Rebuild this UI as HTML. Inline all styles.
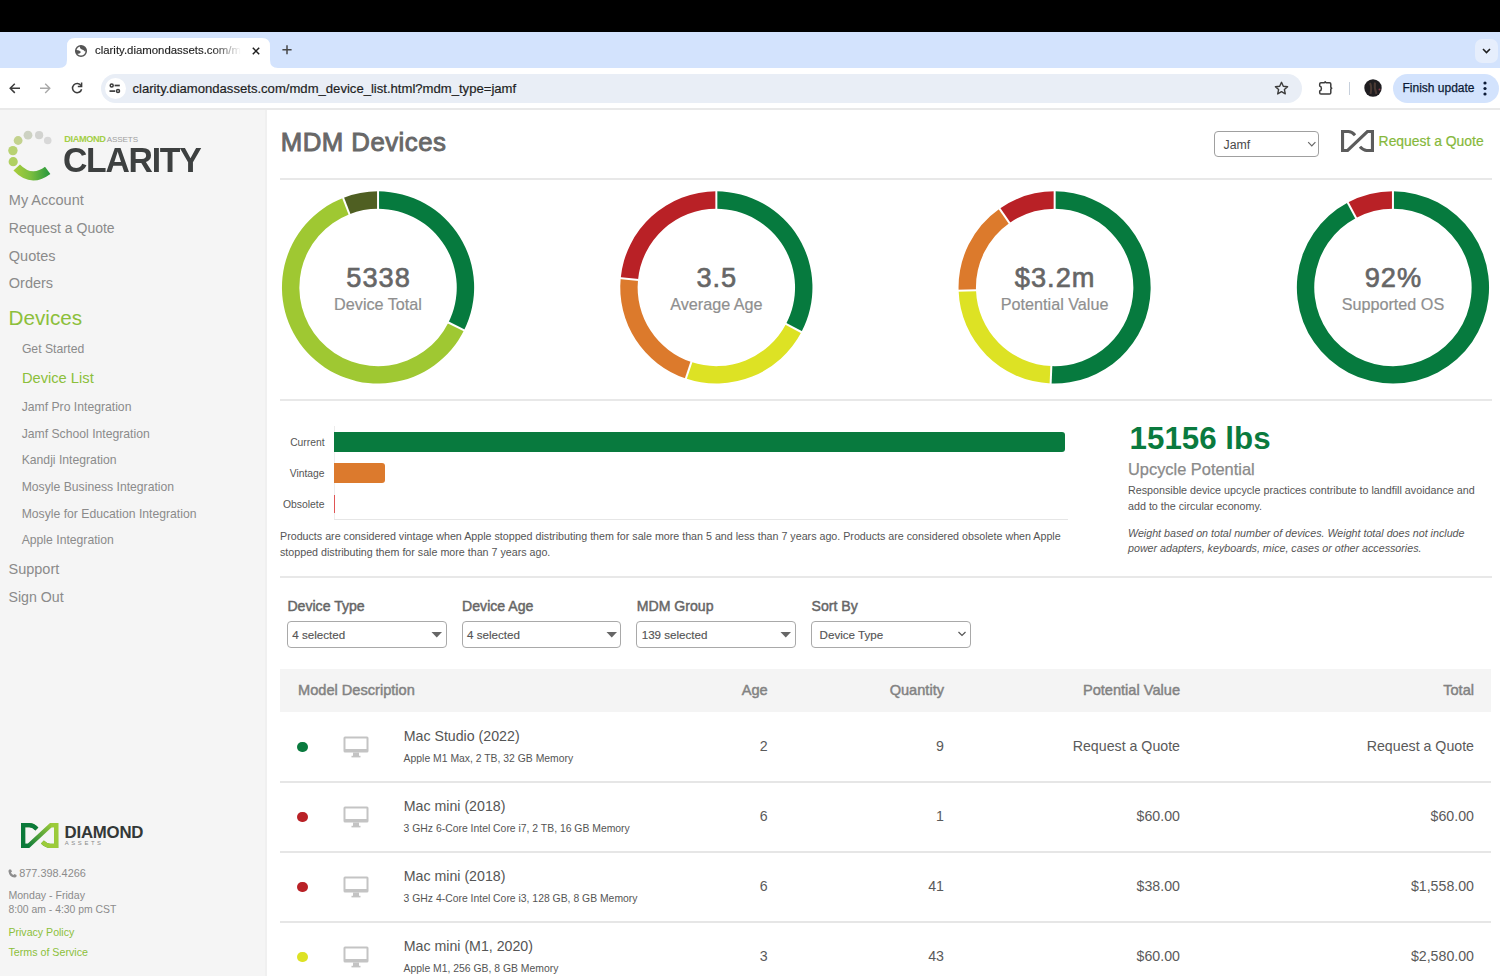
<!DOCTYPE html><html><head><meta charset="utf-8"><style>
html,body{margin:0;padding:0;}
body{width:1500px;height:976px;overflow:hidden;position:relative;background:#fff;font-family:"Liberation Sans",sans-serif;}
.t{position:absolute;white-space:nowrap;}
.r{position:absolute;}
svg{position:absolute;overflow:visible;}
</style></head><body>
<div class="r" style="left:0px;top:0px;width:1500px;height:32px;background:#000;"></div>
<div class="r" style="left:0px;top:32px;width:1500px;height:36px;background:#d3e3fd;"></div>
<div class="r" style="left:0px;top:68px;width:1500px;height:40px;background:#fff;"></div>
<div class="r" style="left:0px;top:108px;width:1500px;height:2px;background:#e9e9e9;"></div>
<svg style="left:0;top:0" width="1500" height="110">
<path d="M59,68 Q67,68 67,60 L67,46 Q67,38 75,38 L262,38 Q270,38 270,46 L270,60 Q270,68 278,68 Z" fill="#fff"/>
</svg>
<svg style="left:73.8px;top:43.6px" width="14" height="14" viewBox="0 0 14 14">
<circle cx="7" cy="7" r="5.3" stroke="#555" stroke-width="1.5" fill="#fff"/>
<path d="M5.8,1.7 Q5.6,4.8 8,5.4 Q9.8,5.8 11.2,7.8 L12.4,5.2 Q10.6,1.2 5.8,1.7 Z" fill="#555"/>
<path d="M1.7,6 Q5,5.6 7,8 Q6,10.2 2.2,10 Z" fill="#555"/>
</svg>
<div class="t" style="top:44.65px;font-size:11.4px;line-height:11.4px;color:#1f1f1f;-webkit-text-stroke:0.15px #1f1f1f;left:95.00px;"><span style="display:inline-block;width:146px;overflow:hidden;vertical-align:top;-webkit-mask-image:linear-gradient(90deg,#000 80%,transparent)">clarity.diamondassets.com/mdm_device_list</span></div>
<svg style="left:251.5px;top:46.5px" width="8" height="8" viewBox="0 0 8 8"><path d="M0.8,0.8 L7.2,7.2 M7.2,0.8 L0.8,7.2" stroke="#1f1f1f" stroke-width="1.5"/></svg>
<svg style="left:282px;top:45px" width="10" height="10" viewBox="0 0 10 10"><path d="M5,0.3 V9.3 M0.4,4.8 H9.6" stroke="#474747" stroke-width="1.5"/></svg>
<div class="r" style="left:1475px;top:39px;width:23px;height:23.5px;background:#e6eefc;border-radius:7px;"></div>
<svg style="left:1480px;top:44px" width="13" height="13" viewBox="0 0 13 13"><path d="M3,5 L6.5,8.5 L10,5" stroke="#1f1f1f" stroke-width="1.6" fill="none"/></svg>
<svg style="left:9px;top:83px" width="12" height="11" viewBox="0 0 12 11"><path d="M11,5.3 H1.2 M5.8,0.7 L1.2,5.3 L5.8,9.9" stroke="#3c3c3c" stroke-width="1.5" fill="none"/></svg>
<svg style="left:40px;top:83px" width="12" height="11" viewBox="0 0 12 11"><path d="M0,5.3 H9.8 M5.2,0.7 L9.8,5.3 L5.2,9.9" stroke="#a9a9a9" stroke-width="1.4" fill="none"/></svg>
<svg style="left:70.7px;top:81.9px" width="12" height="12" viewBox="0 0 12 12"><path d="M10,3.6 A4.6,4.6 0 1 0 10.6,7.2" stroke="#3c3c3c" stroke-width="1.5" fill="none"/><path d="M10.6,0.6 V4.4 H6.8" stroke="#3c3c3c" stroke-width="1.5" fill="none"/></svg>
<div class="r" style="left:101px;top:74px;width:1201px;height:28.5px;background:#e9eef6;border-radius:14.5px;"></div>
<div class="r" style="left:105px;top:78px;width:21px;height:21px;border-radius:50%;background:#fff;"></div>
<svg style="left:108px;top:81px" width="15" height="15" viewBox="0 0 15 15">
<circle cx="3.7" cy="4.5" r="1.5" stroke="#3c3c3c" stroke-width="1.5" fill="none"/><path d="M6.6,4.5 H11.8" stroke="#3c3c3c" stroke-width="1.7"/>
<circle cx="10" cy="10.1" r="1.5" stroke="#3c3c3c" stroke-width="1.5" fill="none"/><path d="M1.5,10.1 H7.2" stroke="#3c3c3c" stroke-width="1.7"/>
</svg>
<div class="t" style="top:82.21px;font-size:13.1px;line-height:13.1px;color:#1f1f1f;-webkit-text-stroke:0.2px #1f1f1f;left:132.50px;">clarity.diamondassets.com/mdm_device_list.html?mdm_type=jamf</div>
<svg style="left:1274px;top:81px" width="15" height="15" viewBox="0 0 15 15"><path d="M7.5,1.3 L9.3,5.3 L13.6,5.7 L10.4,8.6 L11.3,12.9 L7.5,10.7 L3.7,12.9 L4.6,8.6 L1.4,5.7 L5.7,5.3 Z" stroke="#3c3c3c" stroke-width="1.4" fill="none" stroke-linejoin="round"/></svg>
<svg style="left:1318px;top:80px" width="17" height="16" viewBox="0 0 17 16"><path d="M3,2.8 H6.3 L7.2,1.9 L8.1,2.8 H11.5 Q12.8,2.8 12.8,4.1 V7.3 L13.7,8.2 L12.8,9.1 V12.7 Q12.8,14 11.5,14 H3 Q1.7,14 1.7,12.7 V11 Q3.4,10.6 3.4,8.5 Q3.4,6.4 1.7,6 V4.1 Q1.7,2.8 3,2.8 Z" stroke="#3c3c3c" stroke-width="1.5" fill="none" stroke-linejoin="round"/></svg>
<div class="r" style="left:1349px;top:82px;width:1px;height:13px;background:#c7d0dc;"></div>
<svg style="left:1363.5px;top:79px" width="18" height="18" viewBox="0 0 18 18"><circle cx="9" cy="9" r="8.7" fill="#1f1d20"/><path d="M6,4 Q8,8 6.5,15 M11,3.5 Q10,9 12.5,15" stroke="#4a3a34" stroke-width="2" fill="none"/><circle cx="15.5" cy="10.5" r="1" fill="#8a3a4a"/></svg>
<div class="r" style="left:1392.5px;top:73.5px;width:106px;height:29px;background:#d3e3fd;border-radius:14.5px;"></div>
<div class="t" style="top:82.34px;font-size:12px;line-height:12px;color:#0b1a36;-webkit-text-stroke:0.25px #0b1a36;left:1402.50px;">Finish update</div>
<svg style="left:1482px;top:80px" width="6" height="17" viewBox="0 0 6 17"><circle cx="3" cy="3" r="1.6" fill="#0b1a36"/><circle cx="3" cy="8.5" r="1.6" fill="#0b1a36"/><circle cx="3" cy="14" r="1.6" fill="#0b1a36"/></svg>
<div class="r" style="left:0px;top:110px;width:267px;height:866px;background:#f5f5f5;"></div>
<div class="r" style="left:265px;top:110px;width:2px;height:866px;background:#f0f0f0;"></div>
<svg style="left:0;top:120px" width="60" height="70" viewBox="0 0 60 70">
<defs><linearGradient id="lg1" gradientUnits="userSpaceOnUse" x1="14" y1="0" x2="50" y2="0"><stop offset="0" stop-color="#a9cd3c"/><stop offset="0.45" stop-color="#7dbf3f"/><stop offset="1" stop-color="#26983e"/></linearGradient></defs>
<circle cx="47.7" cy="20.5" r="3.8" fill="#d8d8d8"/>
<circle cx="39.1" cy="15.2" r="4.1" fill="#d2d3d0"/>
<circle cx="28" cy="15.2" r="4.4" fill="#cdd2c2"/>
<circle cx="18.1" cy="20.5" r="4.4" fill="#c3d28e"/>
<circle cx="12.9" cy="30.6" r="4.7" fill="#b8d272"/>
<circle cx="13.2" cy="41.7" r="4.6" fill="#b0d062"/>
<path d="M16.7,47.5 Q31.2,62.65 47.7,50.4" stroke="url(#lg1)" stroke-width="9" fill="none"/>
</svg>
<div class="t" style="top:134.91px;font-size:9.2px;line-height:9.2px;color:#555;left:64.20px;"><span style="color:#a3cf45;font-weight:bold;letter-spacing:-0.35px">DIAMOND</span><span style="color:#a0a0a0;margin-left:1px;letter-spacing:-0.1px;font-size:8.1px">ASSETS</span></div>
<div class="t" style="top:142.85px;font-size:35.5px;line-height:35.5px;color:#3d4040;font-weight:bold;letter-spacing:-1.3px;left:62.50px;transform:scaleX(0.95);transform-origin:left;">CLARITY</div>
<div class="t" style="top:193.03px;font-size:14.5px;line-height:14.5px;color:#8b8b8b;left:8.80px;">My Account</div>
<div class="t" style="top:221.45px;font-size:14px;line-height:14px;color:#8b8b8b;left:8.80px;">Request a Quote</div>
<div class="t" style="top:249.03px;font-size:14.5px;line-height:14.5px;color:#8b8b8b;left:8.80px;">Quotes</div>
<div class="t" style="top:276.43px;font-size:14.5px;line-height:14.5px;color:#8b8b8b;left:8.80px;">Orders</div>
<div class="t" style="top:307.68px;font-size:20.7px;line-height:20.7px;color:#8cbf3b;left:8.50px;">Devices</div>
<div class="t" style="top:342.57px;font-size:12.2px;line-height:12.2px;color:#8b8b8b;left:21.90px;">Get Started</div>
<div class="t" style="top:370.56px;font-size:14.7px;line-height:14.7px;color:#8cbf3b;left:21.90px;">Device List</div>
<div class="t" style="top:400.87px;font-size:12.2px;line-height:12.2px;color:#8b8b8b;left:21.70px;">Jamf Pro Integration</div>
<div class="t" style="top:427.57px;font-size:12.2px;line-height:12.2px;color:#8b8b8b;left:21.70px;">Jamf School Integration</div>
<div class="t" style="top:454.27px;font-size:12.2px;line-height:12.2px;color:#8b8b8b;left:21.70px;">Kandji Integration</div>
<div class="t" style="top:480.97px;font-size:12.2px;line-height:12.2px;color:#8b8b8b;left:21.70px;">Mosyle Business Integration</div>
<div class="t" style="top:507.67px;font-size:12.2px;line-height:12.2px;color:#8b8b8b;left:21.70px;">Mosyle for Education Integration</div>
<div class="t" style="top:534.37px;font-size:12.2px;line-height:12.2px;color:#8b8b8b;left:21.70px;">Apple Integration</div>
<div class="t" style="top:562.03px;font-size:14.5px;line-height:14.5px;color:#8b8b8b;left:8.50px;">Support</div>
<div class="t" style="top:590.08px;font-size:14.2px;line-height:14.2px;color:#8b8b8b;left:8.50px;">Sign Out</div>
<svg style="left:20.6px;top:823px" width="37.3" height="25" viewBox="0 0 37.3 25"><defs><linearGradient id="g2" gradientUnits="userSpaceOnUse" x1="7.46" y1="25" x2="29.84" y2="0"><stop offset="0" stop-color="#0b7a3a"/><stop offset="1" stop-color="#9ccb3a"/></linearGradient></defs><path d="M15.89,5.90 Q12.09,2.10 8.21,2.10 L2.10,2.10 L2.10,22.90 L7.46,22.90 L29.84,2.10 L35.20,2.10 L35.20,22.90 L29.09,22.90 Q25.21,22.90 21.41,19.10" stroke="url(#g2)" stroke-width="4.2" fill="none"/><path d="M15.89,5.90 Q12.09,2.10 8.21,2.10 L2.10,2.10 L2.10,22.90 L7.46,22.90" stroke="#0b7a3a" stroke-width="4.2" fill="none"/><path d="M29.84,2.10 L35.20,2.10 L35.20,22.90 L29.09,22.90 Q25.21,22.90 21.41,19.10" stroke="#9ccb3a" stroke-width="4.2" fill="none"/></svg>
<div class="t" style="top:825.18px;font-size:16.8px;line-height:16.8px;color:#333837;font-weight:bold;letter-spacing:-0.2px;left:64.50px;">DIAMOND</div>
<div class="t" style="top:841.01px;font-size:5.9px;line-height:5.9px;color:#8a8a8a;letter-spacing:2.6px;left:64.80px;">ASSETS</div>
<svg style="left:8px;top:869px" width="9" height="9" viewBox="0 0 9 9"><path d="M1.2,0.6 L3,0.4 L4,2.6 L2.9,3.5 Q3.8,5.3 5.5,6.1 L6.4,5 L8.6,6 L8.4,7.8 Q7.8,8.6 6.6,8.5 Q1.2,7.6 0.5,2.4 Q0.4,1.2 1.2,0.6Z" fill="#8e8e8e"/></svg>
<div class="t" style="top:868.27px;font-size:10.9px;line-height:10.9px;color:#8b8b8b;left:19.20px;">877.398.4266</div>
<div class="t" style="top:889.93px;font-size:10.6px;line-height:10.6px;color:#8b8b8b;left:8.40px;">Monday - Friday</div>
<div class="t" style="top:905.40px;font-size:10.4px;line-height:10.4px;color:#8b8b8b;left:8.40px;">8:00 am - 4:30 pm CST</div>
<div class="t" style="top:926.83px;font-size:10.6px;line-height:10.6px;color:#8cbf3b;left:8.40px;">Privacy Policy</div>
<div class="t" style="top:947.34px;font-size:10.7px;line-height:10.7px;color:#8cbf3b;left:8.40px;">Terms of Service</div>
<div class="t" style="top:130.06px;font-size:25.8px;line-height:25.8px;color:#686868;letter-spacing:0.45px;-webkit-text-stroke:0.9px #686868;left:280.80px;">MDM Devices</div>
<div class="r" style="left:1214.4px;top:131px;width:102.6px;height:24.4px;border:1px solid #a0a0a0;border-radius:4px;background:#fff;"></div>
<div class="t" style="top:139.09px;font-size:12.3px;line-height:12.3px;color:#4a4a4a;left:1223.60px;">Jamf</div>
<svg style="left:1307px;top:141px" width="10" height="7" viewBox="0 0 10 7"><path d="M1.2,1.2 L4.8,4.8 L8.4,1.2" stroke="#666" stroke-width="1.2" fill="none"/></svg>
<svg style="left:1341px;top:130px" width="33" height="22" viewBox="0 0 33 22"><path d="M14.06,5.19 Q10.69,1.55 7.26,1.55 L1.55,1.55 L1.55,20.45 L6.60,20.45 L26.40,1.55 L31.45,1.55 L31.45,20.45 L25.74,20.45 Q22.31,20.45 18.94,16.81" stroke="#5c5c5c" stroke-width="3.1" fill="none" stroke-linejoin="miter"/></svg>
<div class="t" style="top:135.23px;font-size:13.9px;line-height:13.9px;color:#86b83a;-webkit-text-stroke:0.2px #86b83a;left:1378.60px;">Request a Quote</div>
<div class="r" style="left:280px;top:178px;width:1212px;height:1.5px;background:#e8e8e8;"></div>
<svg style="left:0;top:0" width="1500" height="976"><path d="M378.05,191.35 A96.1,96.1 0 0 1 464.05,330.33 L448.48,322.57 A78.7,78.7 0 0 0 378.05,208.75 Z" fill="#067a3e"/><path d="M464.05,330.33 A96.1,96.1 0 1 1 343.14,197.91 L349.46,214.13 A78.7,78.7 0 1 0 448.48,322.57 Z" fill="#9fc832"/><path d="M343.14,197.91 A96.1,96.1 0 0 1 378.05,191.35 L378.05,208.75 A78.7,78.7 0 0 0 349.46,214.13 Z" fill="#4f5f22"/><line x1="378.05" y1="209.45" x2="378.05" y2="189.45" stroke="#fff" stroke-width="2"/><line x1="447.85" y1="322.25" x2="465.75" y2="331.18" stroke="#fff" stroke-width="2"/><line x1="349.72" y1="214.78" x2="342.45" y2="196.14" stroke="#fff" stroke-width="2"/></svg>
<svg style="left:0;top:0" width="1500" height="976"><path d="M716.35,191.35 A96.1,96.1 0 0 1 801.44,332.12 L786.03,324.03 A78.7,78.7 0 0 0 716.35,208.75 Z" fill="#067a3e"/><path d="M801.44,332.12 A96.1,96.1 0 0 1 685.86,378.58 L691.38,362.08 A78.7,78.7 0 0 0 786.03,324.03 Z" fill="#dde224"/><path d="M685.86,378.58 A96.1,96.1 0 0 1 620.69,278.24 L638.01,279.91 A78.7,78.7 0 0 0 691.38,362.08 Z" fill="#dc7a2c"/><path d="M620.69,278.24 A96.1,96.1 0 0 1 716.35,191.35 L716.35,208.75 A78.7,78.7 0 0 0 638.01,279.91 Z" fill="#b92126"/><line x1="716.35" y1="209.45" x2="716.35" y2="189.45" stroke="#fff" stroke-width="2"/><line x1="785.41" y1="323.71" x2="803.12" y2="333.00" stroke="#fff" stroke-width="2"/><line x1="691.60" y1="361.42" x2="685.25" y2="380.39" stroke="#fff" stroke-width="2"/><line x1="638.71" y1="279.97" x2="618.80" y2="278.06" stroke="#fff" stroke-width="2"/></svg>
<svg style="left:0;top:0" width="1500" height="976"><path d="M1054.65,191.35 A96.1,96.1 0 1 1 1050.63,383.47 L1051.35,366.08 A78.7,78.7 0 1 0 1054.65,208.75 Z" fill="#067a3e"/><path d="M1050.63,383.47 A96.1,96.1 0 0 1 958.61,290.80 L976.00,290.20 A78.7,78.7 0 0 0 1051.35,366.08 Z" fill="#dde224"/><path d="M958.61,290.80 A96.1,96.1 0 0 1 999.53,208.73 L1009.51,222.98 A78.7,78.7 0 0 0 976.00,290.20 Z" fill="#dc7a2c"/><path d="M999.53,208.73 A96.1,96.1 0 0 1 1054.65,191.35 L1054.65,208.75 A78.7,78.7 0 0 0 1009.51,222.98 Z" fill="#b92126"/><line x1="1054.65" y1="209.45" x2="1054.65" y2="189.45" stroke="#fff" stroke-width="2"/><line x1="1051.38" y1="365.38" x2="1050.55" y2="385.36" stroke="#fff" stroke-width="2"/><line x1="976.70" y1="290.17" x2="956.71" y2="290.87" stroke="#fff" stroke-width="2"/><line x1="1009.91" y1="223.56" x2="998.44" y2="207.17" stroke="#fff" stroke-width="2"/></svg>
<svg style="left:0;top:0" width="1500" height="976"><path d="M1392.95,191.35 A96.1,96.1 0 1 1 1347.83,202.60 L1356.00,217.96 A78.7,78.7 0 1 0 1392.95,208.75 Z" fill="#067a3e"/><path d="M1347.83,202.60 A96.1,96.1 0 0 1 1392.95,191.35 L1392.95,208.75 A78.7,78.7 0 0 0 1356.00,217.96 Z" fill="#b92126"/><line x1="1392.95" y1="209.45" x2="1392.95" y2="189.45" stroke="#fff" stroke-width="2"/><line x1="1356.33" y1="218.58" x2="1346.94" y2="200.92" stroke="#fff" stroke-width="2"/></svg>
<div class="t" style="top:264.38px;font-size:27.2px;line-height:27.2px;color:#666;letter-spacing:1.0px;-webkit-text-stroke:0.65px #666;left:78.05px;width:600px;text-align:center;text-indent:1px;">5338</div>
<div class="t" style="top:295.89px;font-size:16.2px;line-height:16.2px;color:#8f8f8f;-webkit-text-stroke:0.2px #8f8f8f;left:78.05px;width:600px;text-align:center;">Device Total</div>
<div class="t" style="top:264.38px;font-size:27.2px;line-height:27.2px;color:#666;letter-spacing:1.0px;-webkit-text-stroke:0.65px #666;left:416.35px;width:600px;text-align:center;text-indent:1px;">3.5</div>
<div class="t" style="top:295.89px;font-size:16.2px;line-height:16.2px;color:#8f8f8f;-webkit-text-stroke:0.2px #8f8f8f;left:416.35px;width:600px;text-align:center;">Average Age</div>
<div class="t" style="top:264.38px;font-size:27.2px;line-height:27.2px;color:#666;letter-spacing:1.0px;-webkit-text-stroke:0.65px #666;left:754.65px;width:600px;text-align:center;text-indent:1px;">$3.2m</div>
<div class="t" style="top:295.89px;font-size:16.2px;line-height:16.2px;color:#8f8f8f;-webkit-text-stroke:0.2px #8f8f8f;left:754.65px;width:600px;text-align:center;">Potential Value</div>
<div class="t" style="top:264.38px;font-size:27.2px;line-height:27.2px;color:#666;letter-spacing:1.0px;-webkit-text-stroke:0.65px #666;left:1092.95px;width:600px;text-align:center;text-indent:1px;">92%</div>
<div class="t" style="top:295.89px;font-size:16.2px;line-height:16.2px;color:#8f8f8f;-webkit-text-stroke:0.2px #8f8f8f;left:1092.95px;width:600px;text-align:center;">Supported OS</div>
<div class="r" style="left:280px;top:399px;width:1212px;height:1.5px;background:#e8e8e8;"></div>
<div class="r" style="left:334px;top:426px;width:1px;height:94px;background:#ececec;"></div>
<div class="r" style="left:334px;top:519px;width:734px;height:1px;background:#e6e6e6;"></div>
<div class="r" style="left:334px;top:432px;width:730.5px;height:20px;background:#087a3e;border-radius:0 3px 3px 0;"></div>
<div class="r" style="left:334px;top:463.4px;width:51.2px;height:19.6px;background:#dc7a2d;border-radius:0 3px 3px 0;"></div>
<div class="r" style="left:334px;top:495px;width:1.3px;height:18px;background:#e05555;"></div>
<div class="t" style="top:437.58px;font-size:10.3px;line-height:10.3px;color:#555;right:1175.50px;text-align:right;">Current</div>
<div class="t" style="top:468.58px;font-size:10.3px;line-height:10.3px;color:#555;right:1175.50px;text-align:right;">Vintage</div>
<div class="t" style="top:499.50px;font-size:10.4px;line-height:10.4px;color:#555;right:1175.50px;text-align:right;">Obsolete</div>
<div class="t" style="top:531.24px;font-size:10.7px;line-height:10.7px;color:#555;left:280.00px;">Products are considered vintage when Apple stopped distributing them for sale more than 5 and less than 7 years ago. Products are considered obsolete when Apple</div>
<div class="t" style="top:546.94px;font-size:10.7px;line-height:10.7px;color:#555;left:280.00px;">stopped distributing them for sale more than 7 years ago.</div>
<div class="r" style="left:280px;top:576px;width:1212px;height:1.5px;background:#e8e8e8;"></div>
<div class="t" style="top:422.70px;font-size:31.3px;line-height:31.3px;color:#0a7a3e;font-weight:bold;left:1129.60px;">15156 lbs</div>
<div class="t" style="top:460.72px;font-size:16.4px;line-height:16.4px;color:#8a8a8a;-webkit-text-stroke:0.25px #8a8a8a;left:1128.00px;">Upcycle Potential</div>
<div class="t" style="top:485.21px;font-size:10.74px;line-height:10.74px;color:#555;left:1128.00px;">Responsible device upcycle practices contribute to landfill avoidance and</div>
<div class="t" style="top:500.81px;font-size:10.74px;line-height:10.74px;color:#555;left:1128.00px;">add to the circular economy.</div>
<div class="t" style="top:527.54px;font-size:10.7px;line-height:10.7px;color:#555;font-style:italic;left:1128.00px;">Weight based on total number of devices. Weight total does not include</div>
<div class="t" style="top:543.14px;font-size:10.7px;line-height:10.7px;color:#555;font-style:italic;left:1128.00px;">power adapters, keyboards, mice, cases or other accessories.</div>
<div class="t" style="top:598.66px;font-size:14.1px;line-height:14.1px;color:#666;-webkit-text-stroke:0.45px #666;left:287.40px;">Device Type</div>
<div class="r" style="left:287.0px;top:621px;width:157.8px;height:25px;border:1px solid #a9a9a9;border-radius:4px;background:#fff;"></div>
<div class="t" style="top:629.18px;font-size:11.6px;line-height:11.6px;color:#555;-webkit-text-stroke:0.15px #555;left:292.30px;">4 selected</div>
<svg style="left:431.0px;top:631px" width="12" height="8" viewBox="0 0 12 8"><path d="M0.5,1 H11 L5.75,6.5 Z" fill="#666"/></svg>
<div class="t" style="top:598.66px;font-size:14.1px;line-height:14.1px;color:#666;-webkit-text-stroke:0.45px #666;left:462.10px;">Device Age</div>
<div class="r" style="left:461.7px;top:621px;width:157.8px;height:25px;border:1px solid #a9a9a9;border-radius:4px;background:#fff;"></div>
<div class="t" style="top:629.18px;font-size:11.6px;line-height:11.6px;color:#555;-webkit-text-stroke:0.15px #555;left:467.00px;">4 selected</div>
<svg style="left:605.7px;top:631px" width="12" height="8" viewBox="0 0 12 8"><path d="M0.5,1 H11 L5.75,6.5 Z" fill="#666"/></svg>
<div class="t" style="top:598.66px;font-size:14.1px;line-height:14.1px;color:#666;-webkit-text-stroke:0.45px #666;left:636.80px;">MDM Group</div>
<div class="r" style="left:636.4px;top:621px;width:157.8px;height:25px;border:1px solid #a9a9a9;border-radius:4px;background:#fff;"></div>
<div class="t" style="top:629.18px;font-size:11.6px;line-height:11.6px;color:#555;-webkit-text-stroke:0.15px #555;left:641.70px;">139 selected</div>
<svg style="left:780.4px;top:631px" width="12" height="8" viewBox="0 0 12 8"><path d="M0.5,1 H11 L5.75,6.5 Z" fill="#666"/></svg>
<div class="t" style="top:598.66px;font-size:14.1px;line-height:14.1px;color:#666;-webkit-text-stroke:0.45px #666;left:811.50px;">Sort By</div>
<div class="r" style="left:811.1px;top:621px;width:157.8px;height:25px;border:1px solid #a9a9a9;border-radius:4px;background:#fff;"></div>
<div class="t" style="top:629.18px;font-size:11.6px;line-height:11.6px;color:#555;-webkit-text-stroke:0.15px #555;left:819.60px;">Device Type</div>
<svg style="left:957.1px;top:630px" width="10" height="8" viewBox="0 0 10 8"><path d="M1.5,2 L5,5.5 L8.5,2" stroke="#555" stroke-width="1.2" fill="none"/></svg>
<div class="r" style="left:280px;top:669px;width:1211px;height:43px;background:#f4f4f4;"></div>
<div class="t" style="top:682.94px;font-size:14.6px;line-height:14.6px;color:#828282;-webkit-text-stroke:0.45px #828282;left:298.00px;">Model Description</div>
<div class="t" style="top:682.94px;font-size:14.6px;line-height:14.6px;color:#828282;-webkit-text-stroke:0.45px #828282;right:732.30px;text-align:right;">Age</div>
<div class="t" style="top:682.94px;font-size:14.6px;line-height:14.6px;color:#828282;-webkit-text-stroke:0.45px #828282;right:556.00px;text-align:right;">Quantity</div>
<div class="t" style="top:682.94px;font-size:14.6px;line-height:14.6px;color:#828282;-webkit-text-stroke:0.45px #828282;right:320.00px;text-align:right;">Potential Value</div>
<div class="t" style="top:682.94px;font-size:14.6px;line-height:14.6px;color:#828282;-webkit-text-stroke:0.45px #828282;right:26.00px;text-align:right;">Total</div>
<div class="r" style="left:297.20000000000005px;top:741.5px;width:10.8px;height:10.8px;border-radius:50%;background:#0a7a3e;"></div>
<svg style="left:342.5px;top:736px" width="26" height="22" viewBox="0 0 26 22">
<rect x="0.5" y="0.5" width="25" height="16" rx="1.5" fill="#c4c4c4"/>
<rect x="2.5" y="2.5" width="21" height="10.5" fill="#fff"/>
<rect x="10" y="16.5" width="6" height="3.5" fill="#c4c4c4"/>
<rect x="8.5" y="19.8" width="9" height="1.6" fill="#c4c4c4"/>
</svg>
<div class="t" style="top:729.48px;font-size:14.2px;line-height:14.2px;color:#555;left:403.70px;">Mac Studio (2022)</div>
<div class="t" style="top:753.50px;font-size:10.4px;line-height:10.4px;color:#555;left:403.60px;">Apple M1 Max, 2 TB, 32 GB Memory</div>
<div class="t" style="top:738.78px;font-size:14.2px;line-height:14.2px;color:#5a5a5a;right:732.30px;text-align:right;">2</div>
<div class="t" style="top:738.78px;font-size:14.2px;line-height:14.2px;color:#5a5a5a;right:556.00px;text-align:right;">9</div>
<div class="t" style="top:738.78px;font-size:14.2px;line-height:14.2px;color:#5a5a5a;right:320.00px;text-align:right;">Request a Quote</div>
<div class="t" style="top:738.78px;font-size:14.2px;line-height:14.2px;color:#5a5a5a;right:26.00px;text-align:right;">Request a Quote</div>
<div class="r" style="left:280px;top:781px;width:1211px;height:1.5px;background:#e6e6e6;"></div>
<div class="r" style="left:297.20000000000005px;top:811.5px;width:10.8px;height:10.8px;border-radius:50%;background:#b92126;"></div>
<svg style="left:342.5px;top:806px" width="26" height="22" viewBox="0 0 26 22">
<rect x="0.5" y="0.5" width="25" height="16" rx="1.5" fill="#c4c4c4"/>
<rect x="2.5" y="2.5" width="21" height="10.5" fill="#fff"/>
<rect x="10" y="16.5" width="6" height="3.5" fill="#c4c4c4"/>
<rect x="8.5" y="19.8" width="9" height="1.6" fill="#c4c4c4"/>
</svg>
<div class="t" style="top:799.48px;font-size:14.2px;line-height:14.2px;color:#555;left:403.70px;">Mac mini (2018)</div>
<div class="t" style="top:823.50px;font-size:10.4px;line-height:10.4px;color:#555;left:403.60px;">3 GHz 6-Core Intel Core i7, 2 TB, 16 GB Memory</div>
<div class="t" style="top:808.78px;font-size:14.2px;line-height:14.2px;color:#5a5a5a;right:732.30px;text-align:right;">6</div>
<div class="t" style="top:808.78px;font-size:14.2px;line-height:14.2px;color:#5a5a5a;right:556.00px;text-align:right;">1</div>
<div class="t" style="top:808.78px;font-size:14.2px;line-height:14.2px;color:#5a5a5a;right:320.00px;text-align:right;">$60.00</div>
<div class="t" style="top:808.78px;font-size:14.2px;line-height:14.2px;color:#5a5a5a;right:26.00px;text-align:right;">$60.00</div>
<div class="r" style="left:280px;top:851px;width:1211px;height:1.5px;background:#e6e6e6;"></div>
<div class="r" style="left:297.20000000000005px;top:881.5px;width:10.8px;height:10.8px;border-radius:50%;background:#b92126;"></div>
<svg style="left:342.5px;top:876px" width="26" height="22" viewBox="0 0 26 22">
<rect x="0.5" y="0.5" width="25" height="16" rx="1.5" fill="#c4c4c4"/>
<rect x="2.5" y="2.5" width="21" height="10.5" fill="#fff"/>
<rect x="10" y="16.5" width="6" height="3.5" fill="#c4c4c4"/>
<rect x="8.5" y="19.8" width="9" height="1.6" fill="#c4c4c4"/>
</svg>
<div class="t" style="top:869.48px;font-size:14.2px;line-height:14.2px;color:#555;left:403.70px;">Mac mini (2018)</div>
<div class="t" style="top:893.50px;font-size:10.4px;line-height:10.4px;color:#555;left:403.60px;">3 GHz 4-Core Intel Core i3, 128 GB, 8 GB Memory</div>
<div class="t" style="top:878.78px;font-size:14.2px;line-height:14.2px;color:#5a5a5a;right:732.30px;text-align:right;">6</div>
<div class="t" style="top:878.78px;font-size:14.2px;line-height:14.2px;color:#5a5a5a;right:556.00px;text-align:right;">41</div>
<div class="t" style="top:878.78px;font-size:14.2px;line-height:14.2px;color:#5a5a5a;right:320.00px;text-align:right;">$38.00</div>
<div class="t" style="top:878.78px;font-size:14.2px;line-height:14.2px;color:#5a5a5a;right:26.00px;text-align:right;">$1,558.00</div>
<div class="r" style="left:280px;top:921px;width:1211px;height:1.5px;background:#e6e6e6;"></div>
<div class="r" style="left:297.20000000000005px;top:951.5px;width:10.8px;height:10.8px;border-radius:50%;background:#dde224;"></div>
<svg style="left:342.5px;top:946px" width="26" height="22" viewBox="0 0 26 22">
<rect x="0.5" y="0.5" width="25" height="16" rx="1.5" fill="#c4c4c4"/>
<rect x="2.5" y="2.5" width="21" height="10.5" fill="#fff"/>
<rect x="10" y="16.5" width="6" height="3.5" fill="#c4c4c4"/>
<rect x="8.5" y="19.8" width="9" height="1.6" fill="#c4c4c4"/>
</svg>
<div class="t" style="top:939.48px;font-size:14.2px;line-height:14.2px;color:#555;left:403.70px;">Mac mini (M1, 2020)</div>
<div class="t" style="top:963.50px;font-size:10.4px;line-height:10.4px;color:#555;left:403.60px;">Apple M1, 256 GB, 8 GB Memory</div>
<div class="t" style="top:948.78px;font-size:14.2px;line-height:14.2px;color:#5a5a5a;right:732.30px;text-align:right;">3</div>
<div class="t" style="top:948.78px;font-size:14.2px;line-height:14.2px;color:#5a5a5a;right:556.00px;text-align:right;">43</div>
<div class="t" style="top:948.78px;font-size:14.2px;line-height:14.2px;color:#5a5a5a;right:320.00px;text-align:right;">$60.00</div>
<div class="t" style="top:948.78px;font-size:14.2px;line-height:14.2px;color:#5a5a5a;right:26.00px;text-align:right;">$2,580.00</div>
</body></html>
